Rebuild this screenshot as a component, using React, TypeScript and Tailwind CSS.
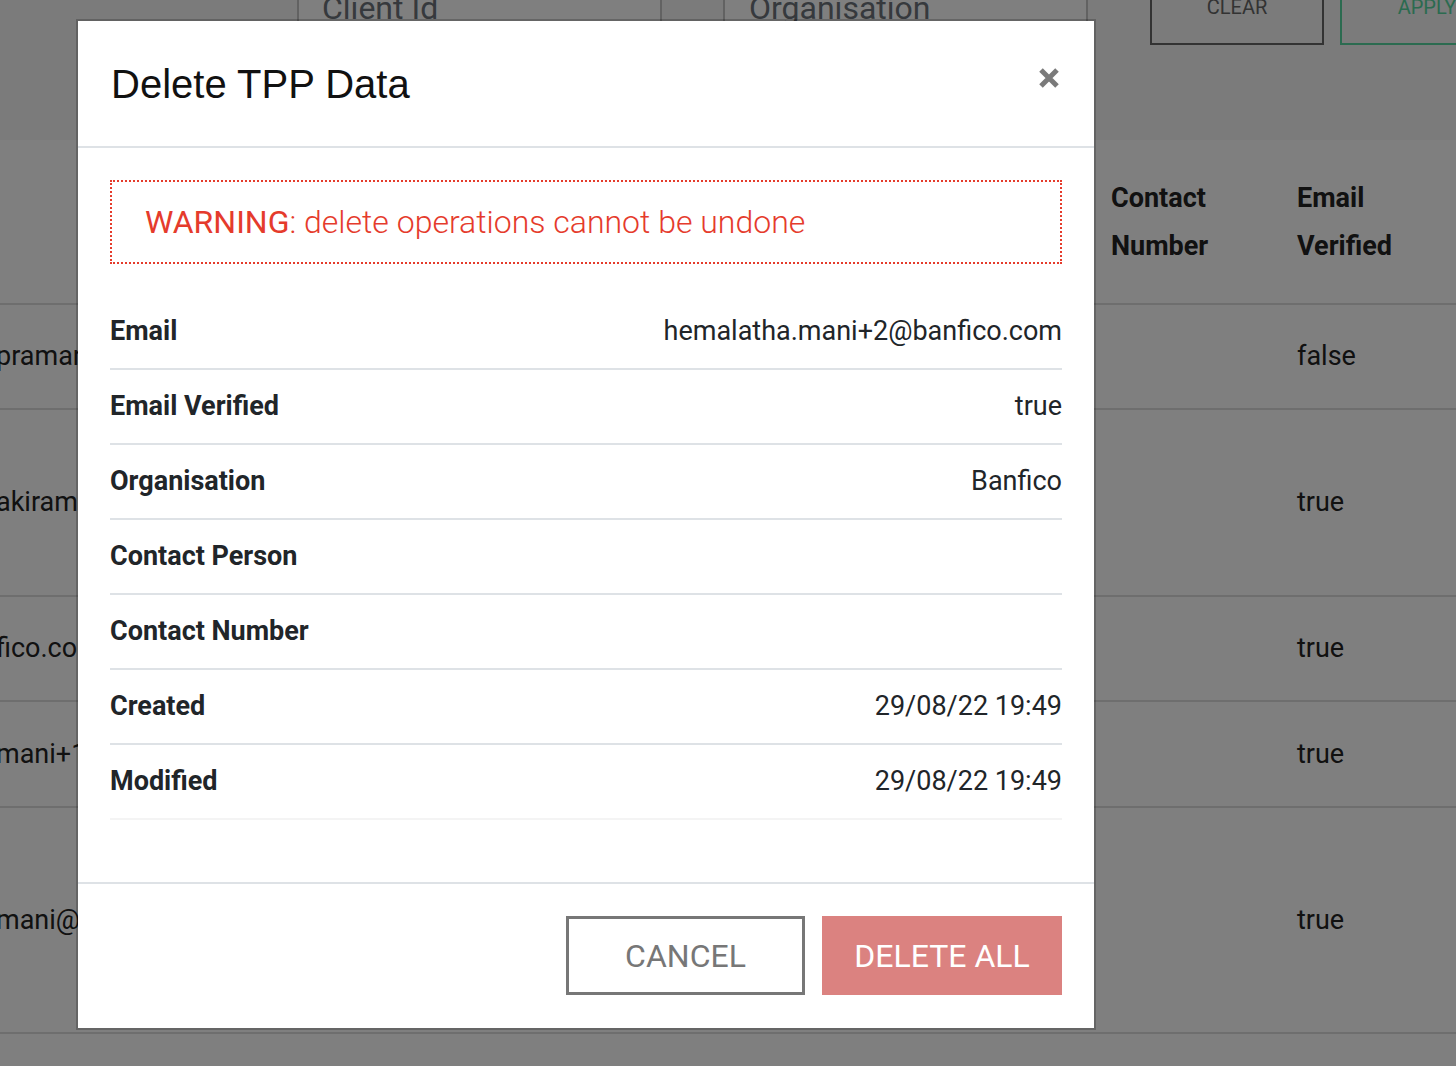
import React from "react";

const rows = [
  { label: "Email", value: "hemalatha.mani+2@banfico.com" },
  { label: "Email Verified", value: "true" },
  { label: "Organisation", value: "Banfico" },
  { label: "Contact Person", value: "" },
  { label: "Contact Number", value: "" },
  { label: "Created", value: "29/08/22 19:49" },
  { label: "Modified", value: "29/08/22 19:49" },
];

const tableRows = [
  { email: "pramani.s@banfico.com", verified: "false", h: "h-[105px]" },
  { email: "akiraman@banfico.com", verified: "true", h: "h-[187px]" },
  { email: "fico.com", verified: "true", h: "h-[105px]" },
  { email: "mani+1@banfico.com", verified: "true", h: "h-[106px]" },
  { email: "mani@banfico.com", verified: "true", h: "h-[226px]" },
  { email: "", verified: "", h: "h-[80px]" },
];

function CloseIcon() {
  return (
    <svg width="22" height="22" viewBox="0 0 22 22">
      <path d="M3 3 L19 19 M19 3 L3 19" stroke="#7a7a7a" strokeWidth="5" />
    </svg>
  );
}

export default function App() {
  return (
    <div className="relative w-[1456px] h-[1066px] overflow-hidden bg-white font-['Roboto',sans-serif] text-[#222]">
      {/* page behind the modal */}
      <div className="h-[140px] bg-[#f7f7f7] flex items-start">
        <div className="shrink-0 ml-[297px] -mt-[52px] w-[365px] h-[120px] border-2 border-[#c4c4c4] bg-white flex items-center pl-[23px] text-[32px] text-[#6c737a]">
          Client Id
        </div>
        <div className="shrink-0 ml-[61px] -mt-[52px] w-[365px] h-[120px] border-2 border-[#c4c4c4] bg-white flex items-center pl-[24px] text-[32px] text-[#6c737a]">
          Organisation
        </div>
        <button className="shrink-0 ml-[62px] -mt-[31px] w-[174px] h-[76px] border-2 border-[#666] flex items-center justify-center text-[20px] text-[#666]">
          CLEAR
        </button>
        <button className="shrink-0 ml-[16px] -mt-[31px] w-[174px] h-[76px] border-2 border-[#56d6a0] flex items-center justify-center text-[20px] text-[#56d6a0]">
          APPLY
        </button>
      </div>

      <div className="h-[165px] border-b-2 border-[#dcdcdc] flex items-center text-[27px] font-bold leading-[48px]">
        <div className="w-[1111px] shrink-0" />
        <div className="w-[186px] shrink-0">
          Contact
          <br />
          Number
        </div>
        <div>
          Email
          <br />
          Verified
        </div>
      </div>
      {tableRows.map((r, i) => (
        <div key={i} className={`${r.h} border-b-2 border-[#dcdcdc] flex items-center text-[27px]`}>
          <div className="w-[1111px] shrink-0 -ml-[4px] whitespace-nowrap overflow-hidden">{r.email}</div>
          <div className="w-[186px] shrink-0 ml-[4px]" />
          <div>{r.verified}</div>
        </div>
      ))}

      {/* overlay + modal */}
      <div className="absolute inset-0 bg-black/50">
        <div className="absolute left-[76px] top-[19px] w-[1020px] border-2 border-black/20 bg-white bg-clip-padding">
          <div className="h-[127px] border-b-2 border-[#dee2e6] flex items-center justify-between pl-[33px] pr-[34px]">
            <h1 className="font-['Liberation_Sans',Arial,sans-serif] text-[40px] text-[#111]">
              Delete TPP Data
            </h1>
            <button className="-mt-[11px]">
              <CloseIcon />
            </button>
          </div>

          <div className="px-[32px] pt-[32px] pb-[62px]">
            <div className="h-[84px] border-2 border-dotted border-[#e53b2c] flex items-center pl-[33px] text-[32px] font-light text-[#e53b2c]">
              <span className="font-normal">WARNING</span>: delete operations cannot be undone
            </div>
            <div className="mt-[31px]">
              {rows.map((r, i) => (
                <div
                  key={r.label}
                  className={`h-[75px] flex items-center justify-between border-b-2 text-[27px] text-[#212529] ${
                    i === rows.length - 1 ? "border-[#f4f4f4]" : "border-[#dee2e6]"
                  }`}
                >
                  <span className="font-bold">{r.label}</span>
                  <span>{r.value}</span>
                </div>
              ))}
            </div>
          </div>

          <div className="border-t-2 border-[#dee2e6] pt-[32px] pb-[33px] pr-[32px] flex justify-end gap-[17px]">
            <button className="w-[239px] h-[79px] border-[3px] border-[#777] text-[#777] text-[32px]">
              CANCEL
            </button>
            <button className="w-[240px] h-[79px] bg-[#db8280] text-white text-[32px]">
              DELETE ALL
            </button>
          </div>
        </div>
      </div>
    </div>
  );
}
